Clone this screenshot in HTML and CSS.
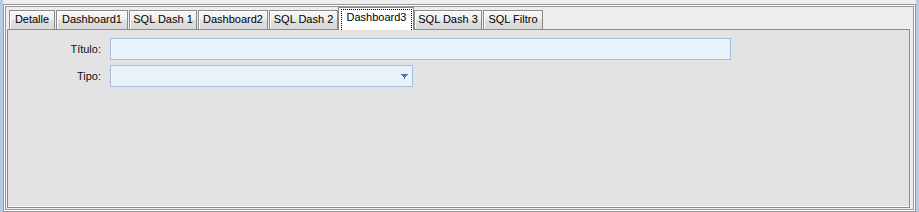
FILE: index.html
```html
<!DOCTYPE html>
<html>
<head>
<meta charset="utf-8">
<link rel="stylesheet" href="styles.css">
</head>
<body>
<div class="window">
  <div class="edge"></div>
  <div class="main">
    <div class="groove">
      <div class="groove-inner">
        <div class="tabs">
          <div class="tab t-detalle">Detalle</div>
          <div class="tab t-dash1">Dashboard1</div>
          <div class="tab t-sql1">SQL Dash 1</div>
          <div class="tab t-dash2">Dashboard2</div>
          <div class="tab t-sql2">SQL Dash 2</div>
          <div class="tab tab-active t-dash3"><span class="focus">Dashboard3</span></div>
          <div class="tab t-sql3">SQL Dash 3</div>
          <div class="tab t-filtro">SQL Filtro</div>
        </div>
        <div class="panel">
          <div class="form">
            <label class="label">Título:</label>
            <div class="field field-wide"></div>
            <label class="label">Tipo:</label>
            <div class="field combo">
              <svg class="arrow" width="7" height="5" viewBox="0 0 7 5">
                <rect x="0" y="0" width="7" height="1"/>
                <rect x="1" y="1" width="5" height="1"/>
                <rect x="2" y="2" width="3" height="1"/>
                <rect x="3" y="3" width="1" height="2"/>
              </svg>
            </div>
          </div>
        </div>
      </div>
    </div>
  </div>
  <div class="edge"></div>
</div>
</body>
</html>
```

FILE: styles.css
```css
* { box-sizing: border-box; }

html, body {
  margin: 0;
  padding: 0;
}

body {
  width: 919px;
  height: 212px;
  overflow: hidden;
  background: #eeeeee;
  font-family: "Liberation Sans", Arial, sans-serif;
  font-size: 11px;
  color: #000;
}

.window {
  display: flex;
  height: 212px;
}

.edge {
  width: 3px;
  background: #b6cce5;
}

.main {
  flex: 1;
  padding-top: 4px;
  display: flex;
  flex-direction: column;
}

.groove {
  flex: 1;
  display: flex;
  border: 1px solid #979797;
  background: #ffffff;
  padding: 1px;
}

.groove-inner {
  flex: 1;
  display: flex;
  flex-direction: column;
  border: 1px solid #979797;
  background: #eeeeee;
}

.tabs {
  display: flex;
  align-items: flex-end;
  height: 22px;
  padding-left: 3px;
}

.tab {
  height: 19px;
  margin-right: 1px;
  padding-top: 2px;
  line-height: 13px;
  text-align: center;
  white-space: nowrap;
  border: 1px solid #8a8a8a;
  border-bottom: none;
  border-radius: 1px 1px 0 0;
  background: linear-gradient(#f7f7f7 0%, #f0f0f0 45%, #dedede 55%, #d9d9d9 100%);
  box-shadow: inset 1px 1px 0 #ffffff;
}

.t-detalle { width: 46px; }
.t-dash1 { width: 72px; }
.t-sql1 { width: 68px; }
.t-dash2 { width: 70px; }
.t-sql2 { width: 69px; margin-right: 0; }
.t-dash3 { width: 76px; }
.t-sql3 { width: 68px; }
.t-filtro { width: 60px; }

.tab-active {
  position: relative;
  z-index: 1;
  height: 23px;
  margin-bottom: -1px;
  margin-right: 0;
  padding: 1px 1px 0 2px;
  display: flex;
  background: #ffffff;
  box-shadow: none;
}

.focus {
  flex: 1;
  padding-top: 1px;
  border: 1px dotted #000;
  border-bottom: none;
  line-height: 13px;
  text-align: center;
}

.panel {
  flex: 1;
  margin: 0 3px 1px 1px;
  border: 1px solid #8a8a8a;
  background: #e3e3e3;
  box-shadow: inset 0 -1px 0 #ffffff;
}

.form {
  display: grid;
  grid-template-columns: 93px max-content;
  column-gap: 9px;
  row-gap: 5px;
  padding-top: 8px;
}

.label {
  text-align: right;
  line-height: 22px;
  color: #111;
}

.field {
  height: 22px;
  border: 1px solid #a6bedc;
  background: #eaf2fc;
}

.field-wide { width: 621px; }

.combo {
  width: 303px;
  display: flex;
  align-items: center;
  justify-content: flex-end;
  padding-right: 4px;
}

.arrow {
  display: block;
  fill: #4a78b4;
}
```
